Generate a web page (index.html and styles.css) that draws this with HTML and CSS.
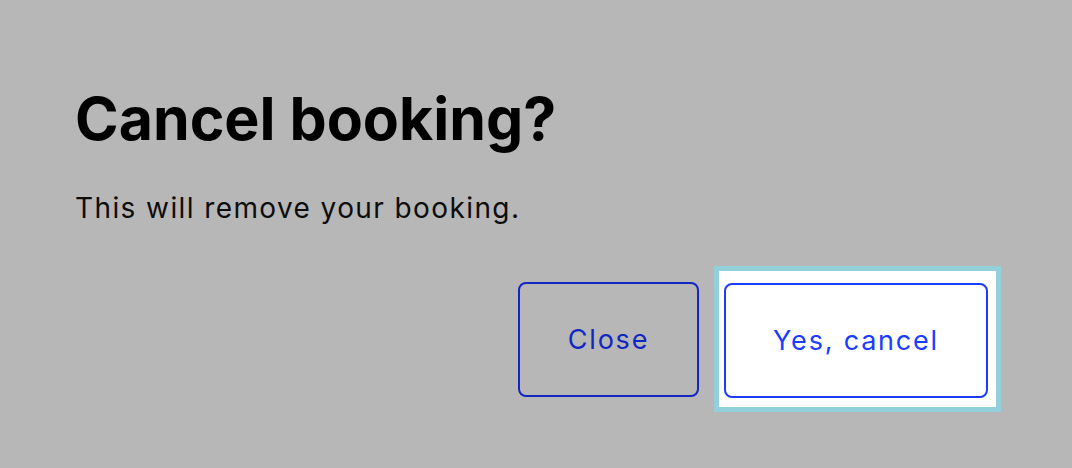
FILE: index.html
```html
<!DOCTYPE html>
<html lang="en">
<head>
<meta charset="utf-8">
<title>Cancel booking?</title>
<link rel="stylesheet" href="styles.css">
</head>
<body>
<div class="dialog">
  <h1 class="title">Cancel booking?</h1>
  <p class="message">This will remove your booking.</p>
  <div class="actions">
    <button class="btn btn-secondary" type="button">Close</button>
    <span class="focus-ring"><button class="btn btn-primary" type="button">Yes, cancel</button></span>
  </div>
</div>
</body>
</html>
```
FILE: styles.css
```css
html, body {
  margin: 0;
  padding: 0;
}
body {
  background: #b7b7b7;
  font-family: Inter, "Liberation Sans", sans-serif;
  width: 1072px;
  height: 468px;
  overflow: hidden;
}
.dialog {
  padding: 83px 71px 0 75px;
  display: flex;
  flex-direction: column;
}
.title {
  margin: 0;
  font-size: 59px;
  font-weight: 700;
  line-height: 72px;
  color: #000;
}
.message {
  margin: 35px 0 0 0;
  font-size: 28px;
  line-height: 36px;
  letter-spacing: 1.4px;
  color: #0d0d0d;
}
.actions {
  margin-top: 40px;
  display: flex;
  justify-content: flex-end;
  align-items: center;
  gap: 15px;
}
.btn {
  font-family: inherit;
  font-size: 27px;
  letter-spacing: 1.8px;
  border-radius: 8px;
  height: 115px;
  padding: 0;
  cursor: pointer;
}
.btn-secondary {
  width: 181px;
  background: transparent;
  border: 2px solid #1226c2;
  color: #1226c2;
}
.focus-ring {
  display: inline-flex;
  background: #fff;
  border: 5px solid #92d1dc;
  padding: 12px 8px 9px 5px;
}
.btn-primary {
  width: 264px;
  background: #fff;
  border: 2px solid #1a3cff;
  color: #1a3cff;
}
```
